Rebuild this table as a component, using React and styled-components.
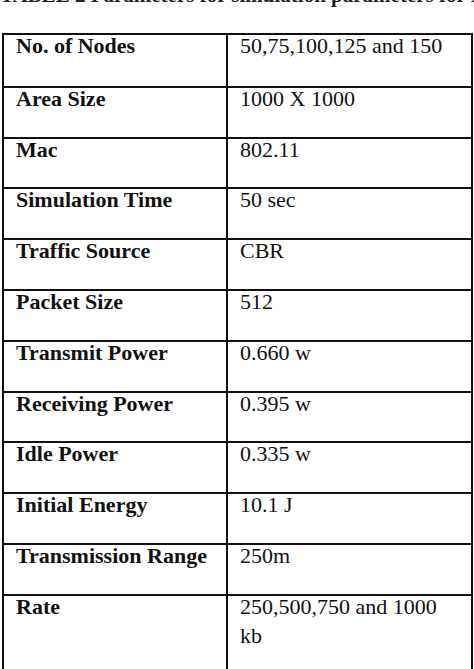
import React from "react";
import styled, { createGlobalStyle } from "styled-components";

const Global = createGlobalStyle`
  html, body { margin: 0; padding: 0; background: #fff; }
  body { overflow: hidden; width: 474px; height: 669px; }
`;

const Page = styled.div`
  width: 474px;
  height: 669px;
  overflow: hidden;
  font-family: "Liberation Serif", "Times New Roman", serif;
  color: #111;
`;

const Caption = styled.div`
  margin-top: -16px;
  height: 23px;
  line-height: 23px;
  font-size: 21px;
  font-weight: bold;
  white-space: nowrap;
  text-align: center;
  overflow: hidden;
  color: #222;
`;

const Table = styled.div`
  margin: 26px 0 0 2px;
  width: 471px;
  border-left: 2px solid #111;
  border-right: 2px solid #111;
  border-top: 2px solid #111;
  box-sizing: border-box;
`;

const Row = styled.div`
  display: grid;
  grid-template-columns: 224px 1fr;
  height: ${(p) => (p.$tall ? "120px" : "50.8px")};
  box-sizing: border-box;
  border-top: ${(p) => (p.$first ? "none" : "2px solid #111")};
`;

const Label = styled.div`
  padding: 0 0 0 12px;
  font-size: 22px;
  line-height: 22px;
  font-weight: bold;
  border-right: 2px solid #111;
`;

const Value = styled.div`
  padding: 0 0 0 12px;
  font-size: 22px;
  line-height: 22px;
  display: flex;
  flex-direction: column;
  gap: 7px;
`;

const rows = [
  ["No. of Nodes", ["50,75,100,125 and 150"]],
  ["Area Size", ["1000 X 1000"]],
  ["Mac", ["802.11"]],
  ["Simulation Time", ["50 sec"]],
  ["Traffic Source", ["CBR"]],
  ["Packet Size", ["512"]],
  ["Transmit Power", ["0.660 w"]],
  ["Receiving Power", ["0.395 w"]],
  ["Idle Power", ["0.335 w"]],
  ["Initial Energy", ["10.1 J"]],
  ["Transmission Range", ["250m"]],
  ["Rate", ["250,500,750 and 1000", "kb"]],
];

export default function App() {
  return (
    <Page>
      <Global />
      <Caption>TABLE 2 Parameters for simulation parameters for NS2</Caption>
      <Table>
        {rows.map(([label, lines], i) => (
          <Row key={label} $first={i === 0} $tall={i === rows.length - 1}>
            <Label>{label}</Label>
            <Value>
              {lines.map((l) => (
                <span key={l}>{l}</span>
              ))}
            </Value>
          </Row>
        ))}
      </Table>
    </Page>
  );
}
